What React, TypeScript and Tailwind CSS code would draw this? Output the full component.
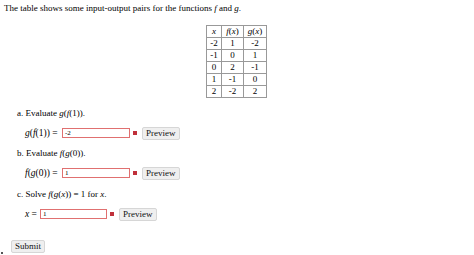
import React from 'react';

const Cell: React.FC<{ w: string; children: React.ReactNode }> = ({ w, children }) => (
  <td className={`border border-[#999] text-center h-[12px] leading-[11px] p-0 ${w}`}>{children}</td>
);

const rows = [
  ['-2', '1', '-2'],
  ['-1', '0', '1'],
  ['0', '2', '-1'],
  ['1', '-1', '0'],
  ['2', '-2', '2'],
];

const btn = "h-[13px] px-[3px] bg-[#efefef] border border-[#d6d6d6] rounded-[2px] text-[9px] leading-[11px] text-[#111] font-['Liberation_Serif',serif]";

const AnswerRow: React.FC<{ label: React.ReactNode; value: string; labelW: string; inputW: string }> = ({ label, value, labelW, inputW }) => (
  <div className="flex items-center h-[14px] pl-[25px]">
    <span className={`${labelW} whitespace-nowrap text-[9.5px]`}>{label}</span>
    <div className={`${inputW} h-[10px] border border-[#e07070] bg-white text-[7px] leading-[8px] pl-[2px] text-black`}>{value}</div>
    <span className="ml-[3px] w-[4px] h-[4px] bg-[#c0303a]" />
    <button className={`ml-[5px] ${btn}`}>Preview</button>
  </div>
);

export default function App() {
  return (
    <div className="w-[474px] h-[255px] bg-white text-black text-[9px] relative font-['Liberation_Serif','Times_New_Roman',serif]">
      <div className="pl-[4px] pt-[3px] leading-[10px]">
        The table shows some input-output pairs for the functions <i>f</i> and <i>g</i>.
      </div>
      <div className="pl-[206px] mt-[12px]">
        <table className="border-collapse text-[9px]">
          <tbody>
            <tr>
              <Cell w="w-[15px]"><i>x</i></Cell>
              <Cell w="w-[22px]"><i>f</i>(<i>x</i>)</Cell>
              <Cell w="w-[23px]"><i>g</i>(<i>x</i>)</Cell>
            </tr>
            {rows.map((r, i) => (
              <tr key={i}>
                <Cell w="w-[15px]">{r[0]}</Cell>
                <Cell w="w-[22px]">{r[1]}</Cell>
                <Cell w="w-[23px]">{r[2]}</Cell>
              </tr>
            ))}
          </tbody>
        </table>
      </div>
      <div className="pl-[17px] mt-[10px] leading-[10px]">
        a. Evaluate <i>g</i>(<i>f</i>(1)).
      </div>
      <div className="mt-[8px]">
        <AnswerRow labelW="w-[37px]" inputW="w-[68px]" value="-2" label={<><i>g</i>(<i>f</i>(1)) =</>} />
      </div>
      <div className="pl-[17px] mt-[8px] leading-[10px]">
        b. Evaluate <i>f</i>(<i>g</i>(0)).
      </div>
      <div className="mt-[8px]">
        <AnswerRow labelW="w-[37px]" inputW="w-[68px]" value="1" label={<><i>f</i>(<i>g</i>(0)) =</>} />
      </div>
      <div className="pl-[17px] mt-[9px] leading-[10px]">
        c. Solve <i>f</i>(<i>g</i>(<i>x</i>)) = 1 for <i>x</i>.
      </div>
      <div className="mt-[8px]">
        <AnswerRow labelW="w-[15px]" inputW="w-[67px]" value="1" label={<><i>x</i> =</>} />
      </div>
      <div className="pl-[11px] mt-[19px]">
        <button className={btn}>Submit</button>
      </div>
      <span className="absolute left-[1px] bottom-[1px] w-[2px] h-[2px] bg-[#555]" />
    </div>
  );
}
